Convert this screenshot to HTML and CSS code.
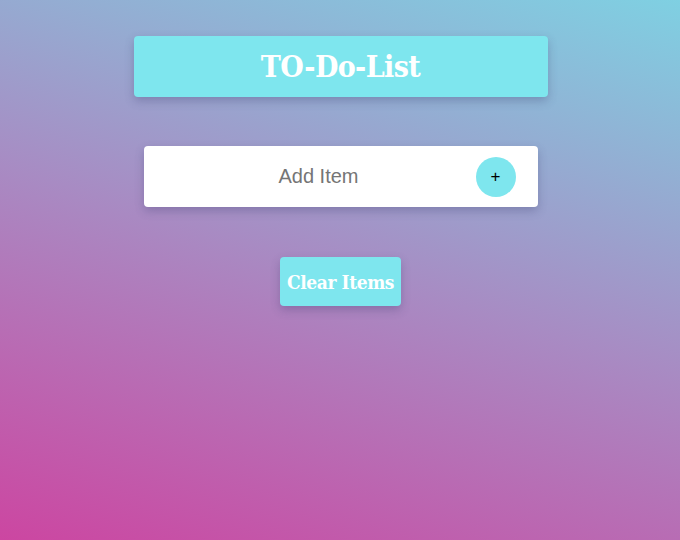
FILE: index.html
```html
<!DOCTYPE html>
<html>
<head>
<meta charset="utf-8">
<link rel="stylesheet" href="styles.css">
</head>
<body>
<main class="app">
  <h1 class="title">TO-Do-List</h1>
  <div class="add-row">
    <input class="add-input" type="text" placeholder="Add Item">
    <button class="add-btn">+</button>
  </div>
  <button class="clear-btn">Clear Items</button>
</main>
</body>
</html>
```
FILE: styles.css
```css
html, body {
  margin: 0;
  padding: 0;
}
body {
  width: 680px;
  height: 540px;
  background: linear-gradient(17deg, #cc46a1 0%, #a88bc3 50%, #7fd0e2 100%);
  font-family: "Liberation Sans", Arial, sans-serif;
}
.app {
  display: flex;
  flex-direction: column;
  align-items: center;
  padding-top: 36px;
  padding-left: 1px;
}
.title {
  margin: 0;
  width: 414px;
  height: 61px;
  display: flex;
  align-items: center;
  justify-content: center;
  background: #7ee6ee;
  border-radius: 4px;
  box-shadow: 0 4px 10px rgba(60, 60, 110, 0.3);
  color: #fff;
  font-family: "DejaVu Serif Condensed", "DejaVu Serif", serif;
  font-weight: bold;
  font-size: 30px;
  letter-spacing: -0.6px;
  box-sizing: border-box;
}
.add-row {
  margin-top: 49px;
  width: 394px;
  height: 61px;
  background: #fff;
  border-radius: 4px;
  box-shadow: 0 4px 10px rgba(60, 60, 110, 0.3);
  display: flex;
  align-items: center;
  padding-right: 22px;
  box-sizing: border-box;
}
.add-input {
  flex: 1;
  min-width: 0;
  border: none;
  outline: none;
  background: transparent;
  text-align: center;
  font-family: "Liberation Sans", Arial, sans-serif;
  font-size: 20px;
  padding: 0 0 0 18px;
  color: #555;
}
.add-input::placeholder {
  color: #757575;
}
.add-btn {
  width: 40px;
  height: 40px;
  border-radius: 50%;
  border: none;
  background: #7ee6ee;
  color: #000;
  font-family: "Liberation Sans", Arial, sans-serif;
  font-size: 17px;
  font-weight: normal;
  padding: 0;
  display: flex;
  align-items: center;
  justify-content: center;
}
.clear-btn {
  margin-top: 50px;
  width: 121px;
  height: 49px;
  border: none;
  border-radius: 4px;
  background: #7ee6ee;
  box-shadow: 0 4px 10px rgba(60, 60, 110, 0.3);
  color: #fff;
  font-family: "DejaVu Serif Condensed", "DejaVu Serif", serif;
  font-weight: bold;
  font-size: 19px;
  letter-spacing: -0.4px;
  padding: 0;
}
```
